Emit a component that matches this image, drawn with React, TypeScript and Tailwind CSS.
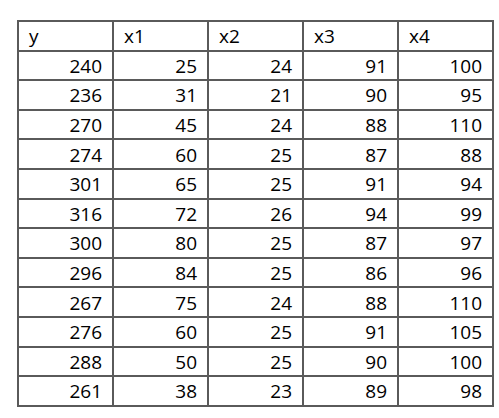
import React from 'react';

const headers = ['y', 'x1', 'x2', 'x3', 'x4'];

const rows: number[][] = [
  [240, 25, 24, 91, 100],
  [236, 31, 21, 90, 95],
  [270, 45, 24, 88, 110],
  [274, 60, 25, 87, 88],
  [301, 65, 25, 91, 94],
  [316, 72, 26, 94, 99],
  [300, 80, 25, 87, 97],
  [296, 84, 25, 86, 96],
  [267, 75, 24, 88, 110],
  [276, 60, 25, 91, 105],
  [288, 50, 25, 90, 100],
  [261, 38, 23, 89, 98],
];

const App: React.FC = () => {
  return (
    <div className="w-[499px] h-[418px] bg-white pt-[20px] pl-[17px] font-['Open_Sans',sans-serif] text-black">
      <table className="border-collapse table-fixed w-[476px] text-[19px] leading-none">
        <thead>
          <tr className="h-[29.6px]">
            {headers.map((h) => (
              <th key={h} className="border-2 border-[#5a5a5a] px-[10px] pt-[2px] text-left font-medium w-[95px]">
                {h}
              </th>
            ))}
          </tr>
        </thead>
        <tbody>
          {rows.map((r, i) => (
            <tr key={i} className="h-[29.6px]">
              {r.map((v, j) => (
                <td key={j} className="border-2 border-[#5a5a5a] px-[10px] pt-[2px] text-right font-medium">
                  {v}
                </td>
              ))}
            </tr>
          ))}
        </tbody>
      </table>
    </div>
  );
};

export default App;
